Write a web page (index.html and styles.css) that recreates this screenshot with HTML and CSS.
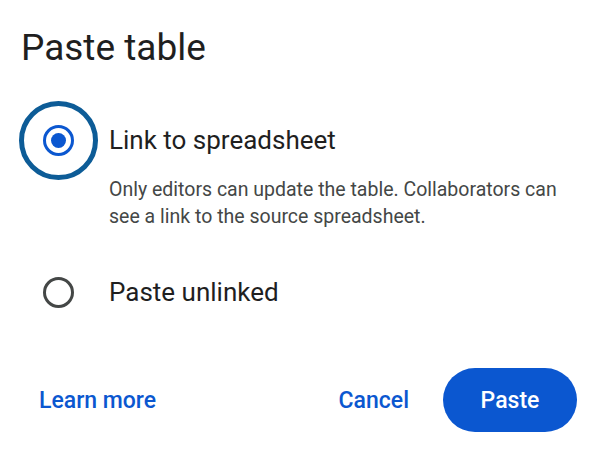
FILE: index.html
```html
<!DOCTYPE html>
<html lang="en">
<head>
<meta charset="utf-8">
<title>Paste table</title>
<link rel="stylesheet" href="styles.css">
</head>
<body>
<div class="dialog">
  <h1 class="title">Paste table</h1>
  <div class="options">
    <div class="option">
      <div class="radio-cell">
        <span class="radio checked focused"><span class="dot"></span></span>
      </div>
      <div class="label">Link to spreadsheet</div>
      <div class="desc">Only editors can update the table. Collaborators can see a link to the source spreadsheet.</div>
    </div>
    <div class="option second">
      <div class="radio-cell">
        <span class="radio"></span>
      </div>
      <div class="label">Paste unlinked</div>
    </div>
  </div>
  <div class="actions">
    <button class="text-btn learn">Learn more</button>
    <div class="spacer"></div>
    <button class="text-btn cancel">Cancel</button>
    <button class="filled-btn">Paste</button>
  </div>
</div>
</body>
</html>
```
FILE: styles.css
```css
*, *::before, *::after { box-sizing: border-box; }
html, body { margin: 0; padding: 0; background: #ffffff; }
body { font-family: Roboto, "Liberation Sans", sans-serif; color: #1f1f1f; }

.dialog {
  width: 600px;
  height: 451px;
  padding: 24px 23px 0 20px;
}

.title {
  margin: 0;
  font-size: 37px;
  line-height: 48px;
  font-weight: 400;
  color: #1f1f1f;
  padding-left: 1px;
}

.options { margin-top: 44px; }

.option {
  display: grid;
  grid-template-columns: 76px 1fr;
  column-gap: 13px;
}
.option.second { margin-top: 38px; }

.radio-cell {
  height: 48px;
  display: flex;
  align-items: center;
  justify-content: center;
  padding-left: 1px;
}

.radio {
  position: relative;
  width: 31px;
  height: 31px;
  border: 3px solid #444746;
  border-radius: 50%;
  display: flex;
  align-items: center;
  justify-content: center;
}
.radio.checked { border-color: #0b57d0; }
.radio .dot {
  width: 15px;
  height: 15px;
  border-radius: 50%;
  background: #0b57d0;
}
.radio.focused::after {
  content: "";
  position: absolute;
  left: 50%;
  top: 50%;
  width: 79px;
  height: 79px;
  margin: -39.5px 0 0 -39.5px;
  border: 5px solid #0d5c97;
  border-radius: 50%;
}

.label {
  font-size: 26px;
  line-height: 48px;
  color: #1f1f1f;
}

.desc {
  grid-column: 2;
  margin-top: 12px;
  font-size: 19.5px;
  line-height: 27px;
  color: #444746;
  max-width: 462px;
}

.actions {
  margin-top: 52px;
  display: flex;
  align-items: center;
}
.spacer { flex: 1; }

button {
  font-family: Roboto, "Liberation Sans", sans-serif;
  font-size: 23px;
  font-weight: 500;
  border: none;
  background: none;
  cursor: pointer;
  height: 64px;
  border-radius: 32px;
}
.text-btn {
  color: #0b57d0;
  padding: 0 19px;
}
.cancel { margin-right: 15px; }
.filled-btn {
  background: #0b57d0;
  color: #ffffff;
  padding: 0;
  width: 134px;
}
```
